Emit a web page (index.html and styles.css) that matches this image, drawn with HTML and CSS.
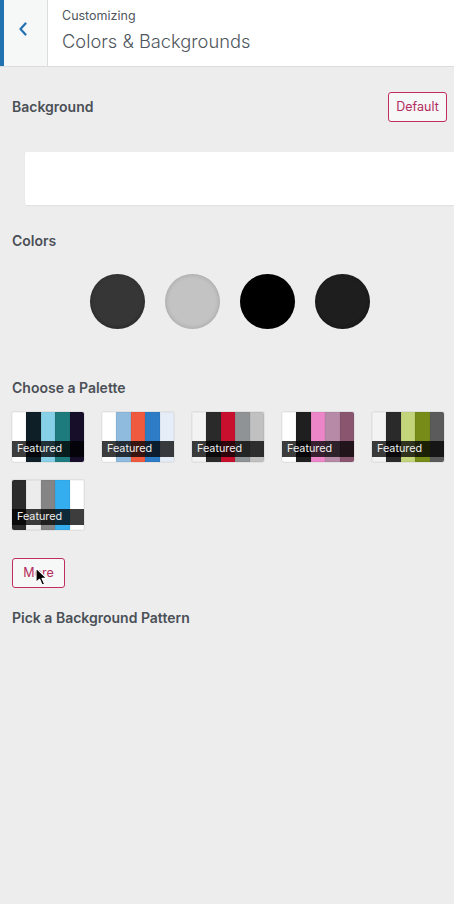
FILE: index.html
```html
<!DOCTYPE html>
<html>
<head>
<meta charset="utf-8">
<link rel="stylesheet" href="styles.css">
</head>
<body>
<header class="head">
  <div class="back">
    <svg width="10" height="14" viewBox="0 0 10 14"><path d="M7.5 1.5 L2.5 7 L7.5 12.5" fill="none" stroke="#2271b1" stroke-width="2.2" stroke-linecap="round" stroke-linejoin="round"/></svg>
  </div>
  <div class="titles">
    <div class="sub">Customizing</div>
    <div class="main">Colors &amp; Backgrounds</div>
  </div>
</header>
<main class="content">
  <div class="row-bg">
    <h3 class="title">Background</h3>
    <button class="btn">Default</button>
  </div>
  <div class="whitebox"></div>

  <h3 class="title t-colors">Colors</h3>
  <div class="circles">
    <span class="circle c1"></span>
    <span class="circle c2"></span>
    <span class="circle c3"></span>
    <span class="circle c4"></span>
  </div>

  <h3 class="title t-pal">Choose a Palette</h3>
  <div class="palettes">
    <div class="pal"><i style="background:#ffffff"></i><i style="background:#0f1f28"></i><i style="background:#86d1e8"></i><i style="background:#1e7b7d"></i><i style="background:#170f2a"></i><span class="feat">Featured</span></div>
    <div class="pal"><i style="background:#ffffff"></i><i style="background:#8fbbde"></i><i style="background:#f05a3f"></i><i style="background:#2f7cc6"></i><i style="background:#e5eef8"></i><span class="feat">Featured</span></div>
    <div class="pal"><i style="background:#f3f3f3"></i><i style="background:#2a2a2a"></i><i style="background:#c8102e"></i><i style="background:#8f9396"></i><i style="background:#c1c1c1"></i><span class="feat">Featured</span></div>
    <div class="pal"><i style="background:#ffffff"></i><i style="background:#1f1f1f"></i><i style="background:#ed86c8"></i><i style="background:#b78aa8"></i><i style="background:#8a566f"></i><span class="feat">Featured</span></div>
    <div class="pal"><i style="background:#f3f3f3"></i><i style="background:#2a2a2a"></i><i style="background:#c3d57a"></i><i style="background:#778c18"></i><i style="background:#5b5b5b"></i><span class="feat">Featured</span></div>
    <div class="pal"><i style="background:#2b2b2b"></i><i style="background:#ececec"></i><i style="background:#858585"></i><i style="background:#35aeef"></i><i style="background:#ffffff"></i><span class="feat">Featured</span></div>
  </div>

  <div class="more-wrap">
    <button class="btn more">More</button>
    <svg class="cursor" width="14" height="20" viewBox="0 0 14 20"><path d="M1 1 L1 15.5 L4.6 12.3 L7.2 18.2 L9.6 17.1 L7.1 11.4 L11.8 11.4 Z" fill="#000" stroke="#fff" stroke-width="1.2" stroke-linejoin="round"/></svg>
  </div>

  <h3 class="title t-pick">Pick a Background Pattern</h3>
</main>
</body>
</html>
```

FILE: styles.css
```css
* { box-sizing: border-box; }
html, body { margin: 0; padding: 0; }
body {
  background: #ededed;
  font-family: Inter, "Noto Sans", "Liberation Sans", sans-serif;
  color: #50575e;
  width: 454px;
  height: 904px;
  overflow: hidden;
}
.head {
  display: flex;
  height: 67px;
  background: #fff;
  border-bottom: 1px solid #dcdcde;
}
.back {
  width: 48px;
  border-left: 4px solid #2271b1;
  border-right: 1px solid #dcdcde;
  background: #f6f7f7;
  display: flex;
  align-items: center;
  justify-content: center;
  padding-right: 6px;
  padding-bottom: 8px;
}
.titles {
  padding: 7px 0 0 14px;
}
.sub {
  font-size: 12.5px;
  line-height: 18px;
  color: #50575e;
}
.main {
  font-size: 18.3px;
  line-height: 26px;
  font-weight: 300;
  color: #50575e;
  margin-top: 3px;
}
.content {
  padding: 0 0 0 12px;
}
.title {
  margin: 0;
  font-size: 14px;
  font-weight: 600;
  line-height: 20px;
  color: #4b5057;
}
.row-bg {
  display: flex;
  justify-content: space-between;
  align-items: center;
  margin-top: 25px;
  padding-right: 7px;
  height: 30px;
}
.btn {
  font-family: inherit;
  font-size: 12.5px;
  color: #b32d5e;
  background: #f6f7f7;
  border: 1px solid #c22d60;
  border-radius: 3px;
  height: 30px;
  padding: 0;
  line-height: 28px;
}
.row-bg .btn { width: 59px; }
.whitebox {
  margin: 30px 0 0 13px;
  height: 53px;
  background: #fff;
  box-shadow: 0 1px 2px rgba(0,0,0,0.06);
  border-radius: 2px 0 0 2px;
}
.t-colors { margin-top: 26px; }
.circles {
  display: flex;
  gap: 20px;
  margin-top: 23px;
  padding-left: 78px;
}
.circle {
  width: 55px;
  height: 55px;
  border-radius: 50%;
  box-shadow: inset 0 -2px 3px rgba(0,0,0,0.12), inset 0 0 4px rgba(0,0,0,0.15);
}
.c1 { background: #363636; }
.c2 { background: #c3c3c3; box-shadow: inset 0 0 5px rgba(0,0,0,0.18); }
.c3 { background: #000; }
.c4 { background: #1e1e1e; }
.t-pal { margin-top: 49px; }
.palettes {
  display: grid;
  grid-template-columns: repeat(5, 72px);
  column-gap: 18px;
  row-gap: 18px;
  margin-top: 14px;
}
.pal {
  position: relative;
  display: flex;
  height: 50px;
  border-radius: 2px;
  overflow: hidden;
  box-shadow: 0 0 0 1px rgba(0,0,0,0.05);
}
.pal i {
  flex: 1;
  display: block;
  box-shadow: inset 0 0 0 1px rgba(0,0,0,0.04);
}
.feat {
  position: absolute;
  left: 0;
  right: 0;
  top: 29px;
  height: 16px;
  background: rgba(0,0,0,0.76);
  color: #eeeeee;
  font-size: 10.8px;
  line-height: 16px;
  padding-left: 5px;
}
.more-wrap {
  position: relative;
  margin-top: 28px;
  width: 53px;
}
.more {
  width: 53px;
  padding: 0;
  font-size: 12.5px;
}
.cursor {
  position: absolute;
  left: 23px;
  top: 9px;
}
.t-pick { margin-top: 20px; }
```
